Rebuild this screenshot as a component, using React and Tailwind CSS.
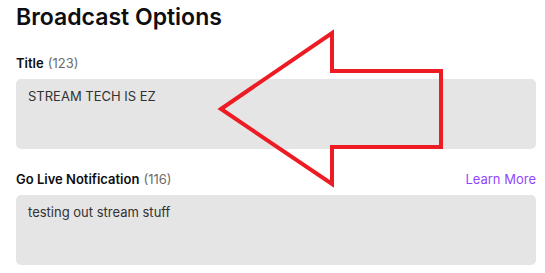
// Broadcast options panel with a red annotation arrow drawn over it.
const Field = ({ label, count, value, extra }) => (
  <div>
    <div className="flex items-end justify-between">
      <p className="text-[13px] leading-[16px]">
        <span className="font-semibold text-[#0e0e10]">{label}</span>
        <span className="ml-1 text-[#6b6b6b]">({count})</span>
      </p>
      {extra}
    </div>
    <div className="mt-[8px] h-[70px] rounded-[5px] bg-[#e5e5e5] px-3 pt-[8px] text-[13px] leading-[18px] text-[#323232]">
      {value}
    </div>
  </div>
);

const App = () => (
  <div className="relative h-[273px] w-[545px] overflow-hidden bg-white pl-4 pr-[9px] font-['Inter',sans-serif]">
    <h2 className="pt-[3px] text-[23px] font-semibold leading-[28px] text-[#0e0e10]">Broadcast Options</h2>
    <div className="mt-[24px]">
      <Field label="Title" count="123" value="STREAM TECH IS EZ" />
    </div>
    <div className="mt-[22px]">
      <Field
        label="Go Live Notification"
        count="116"
        value="testing out stream stuff"
        extra={<span className="text-[13px] leading-[16px] text-[#9147ff]">Learn More</span>}
      />
    </div>
    <svg className="absolute left-0 top-0" width="545" height="273" viewBox="0 0 545 273">
      <polygon
        points="221,109 332,33 332,71 441,71 441,147 332,147 332,184"
        fill="none"
        stroke="#ed1c24"
        strokeWidth="4"
        strokeLinejoin="miter"
      />
    </svg>
  </div>
);

export default App;
